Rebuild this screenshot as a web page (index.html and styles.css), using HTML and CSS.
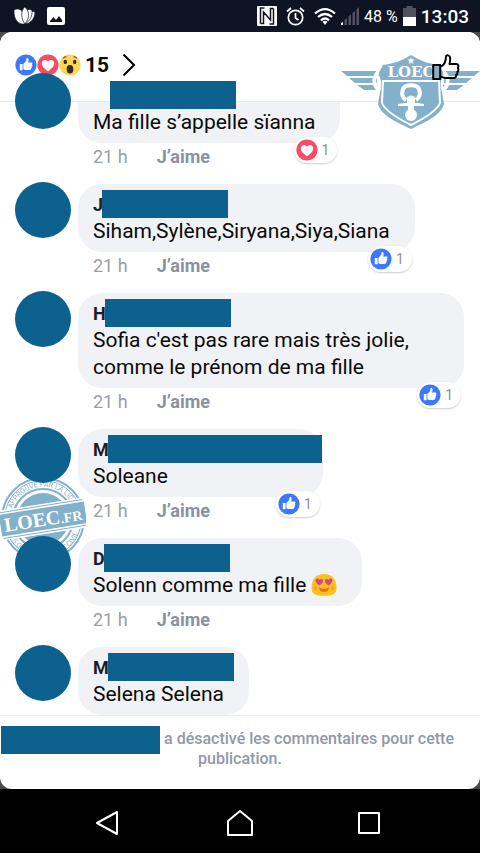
FILE: index.html
```html
<!DOCTYPE html>
<html lang="fr">
<head>
    <meta charset="UTF-8">
    <meta name="viewport" content="width=device-width, initial-scale=1.0">
    <title>Commentaires</title>
    <link rel="stylesheet" href="styles.css">
</head>
<body>
    <!-- Shared icons -->
    <svg class="sprite" aria-hidden="true">
        <symbol id="like" viewBox="0 0 22 22">
            <circle cx="11" cy="11" r="10.6" fill="#3b78fb"/>
            <path fill="#fff" d="M4.8 9.9h2.8v6.4H4.8zM8.4 10l2.7-2.9.5-2.8c.1-.6 1.800-.5 2 1.100.1 1-.2 2.100-.5 3h3c1.600 0 1.700 1.500.8 2 .7.700.4 1.700-.2 2 .4.700.1 1.500-.6 1.800.2 1-.5 1.700-1.400 1.700h-3.500c-1.300 0-1.900-.3-2.800-.7z"/>
        </symbol>
        <symbol id="love" viewBox="0 0 22 22">
            <circle cx="11" cy="11" r="10.6" fill="#f44d64"/>
            <path fill="#fff" d="M11 17.200C8 15 4.800 12.500 4.800 9.200c0-3.600 4.500-4.500 6.200-1.500 1.700-3 6.200-2.100 6.200 1.500 0 3.300-3.200 5.800-6.200 8z"/>
        </symbol>
        <symbol id="wow" viewBox="0 0 22 22">
            <circle cx="11" cy="11" r="10.6" fill="#fbd753"/>
            <ellipse cx="11" cy="15.300" rx="3.300" ry="4.200" fill="#3c2a20"/>
            <ellipse cx="6.300" cy="7.900" rx="1.700" ry="2.200" fill="#3c2a20"/>
            <ellipse cx="15.700" cy="7.900" rx="1.700" ry="2.200" fill="#3c2a20"/>
            <path d="M4.200 4.300q1.200-1.800 3.200-1.700M17.800 4.300q-1.200-1.800-3.200-1.700" fill="none" stroke="#7a5a25" stroke-width="1.200"/>
        </symbol>
    </svg>

    <div class="status-bar">
        <svg width="21" height="18" viewBox="0 0 21 18" fill="#fff" stroke="#0f1425" stroke-width=".7">
            <path d="M11 17C4 18-.5 12 0 3c3-2 7-1 8.500 2 2 3.500 2.500 8 2.500 12z"/>
            <path d="M12 17c5-1 9-6 9-12-1.500-1-3-.5-4.500.5z"/>
            <path d="M11 17c5-3 7.500-8 7-13.500-1.500-1.500-3.500-1.500-5 0z"/>
            <path d="M11 17C7 12 6.500 4 10.500 0c5 3 5.500 11 .5 17z"/>
        </svg>
        <svg class="gallery" width="18" height="18" viewBox="0 0 18 18">
            <rect width="18" height="18" rx="2" fill="#fff"/>
            <path d="M3 15v-1l3.500-4 2.500 3 3-4 3 4v2z" fill="#0f1425"/>
        </svg>
        <div class="status-right">
            <svg class="spaced" width="20" height="20" viewBox="0 0 20 20">
                <rect width="20" height="20" rx="1" fill="#fff"/>
                <path d="M7.500 2H3.500v15.500M3.500 17.500h3V6l7 8V2.500h3M16.500 2.500V18h-4" fill="none" stroke="#0f1425" stroke-width="1.500"/>
            </svg>
            <svg class="spaced" width="19" height="19" viewBox="0 0 19 19" fill="none" stroke="#fff" stroke-width="1.700">
                <circle cx="9.500" cy="10.500" r="7.200"/>
                <path d="M9.500 6v5l3 2M1 4.500L5 1M18 4.500L14 1"/>
            </svg>
            <svg width="22" height="18" viewBox="0 0 22 18" fill="none" stroke="#fff" stroke-width="2.300">
                <path d="M1 6.500q10-8.800 20 0M4 10q7-6 14 0M7 13.300q4-3.600 8 0"/>
                <path d="M8.500 14.700L11 18l2.500-3.300q-2.500-2-5 0z" fill="#fff" stroke="none"/>
            </svg>
            <svg width="18" height="18" viewBox="0 0 18 18" fill="#50535f">
                <path d="M0 18v-2l2-1v3z" fill="#fff"/>
                <path d="M3.500 18v-5l2.500-2v7zM7.500 18V9.500L10 7.500V18zM11.500 18V6L14 4v14zM15.500 18V2.500L18 0v18z"/>
            </svg>
            <span class="battery-level">48 %</span>
            <svg width="13" height="20" viewBox="0 0 13 20">
                <path d="M3.500 0h6v2H13v18H0V2h3.500z" fill="#50535f"/>
                <path d="M0 11h13v9H0z" fill="#fff"/>
            </svg>
            <span class="clock">13:03</span>
        </div>
    </div>

    <main class="backdrop">
        <div class="panel">
            <header class="header">
                <svg class="reaction"><use href="#like"/></svg>
                <svg class="reaction"><use href="#love"/></svg>
                <svg class="reaction"><use href="#wow"/></svg>
                <span class="total">15</span>
                <button class="icon-btn" aria-label="Voir les réactions">
                    <svg width="14" height="24" viewBox="0 0 14 24" fill="none" stroke="#000" stroke-width="2"><path d="M1.500 1.500L12 12 1.500 22.500"/></svg>
                </button>
            </header>

            <!-- LOEC badge -->
            <svg class="badge" width="139" height="76" viewBox="0 0 139 76">
                <g fill="#83b0cb">
                    <path d="M0 17h36v5H6zM8 24h28v5H14zM16 31h21v5H23z"/>
                    <path d="M139 17h-36v5h30zM131 24h-28v5h22zM123 31h-21v5h14z"/>
                    <path d="M70 1c9 6 19 9 28 10l5 9c-4 6-4 12-2 18l2 12c-3 11-18 18-33 25-15-7-30-14-33-25l2-12c2-6 2-12-2-18l5-9c9-1 19-4 28-10z"/>
                </g>
                <path d="M37 18c-5 6-5 13 1 18M103 18c5 6 5 13-1 18" fill="none" stroke="#fff" stroke-width="4"/>
                <path d="M42 27h56l1 22c-3 8-15 15-29 22-14-7-26-14-29-22z" fill="none" stroke="#fff" stroke-width="2"/>
                <path d="M70 3l1 2.500h2.700l-2.100 1.800.8 2.700-2.400-1.600L67.600 10l.8-2.700-2.100-1.800H69z" fill="#fff"/>
                <text class="badge-text" x="70" y="23" text-anchor="middle">LOEC</text>
                <path d="M65 46c-5-3-4-8-3-11 2-5 14-5 16 0 1 3 2 8-3 11" fill="none" stroke="#fff" stroke-width="4"/>
                <path d="M57 50q13-3 26 0v2H57zM66 43q4-3 8 0v6h-8zM67 51h6v6h-6z" fill="#fff"/>
                <circle cx="70" cy="61" r="6" fill="#fff"/>
            </svg>
            <button class="icon-btn like-page" aria-label="J’aime la publication">
                <svg width="28" height="26" viewBox="0 0 28 26" fill="none" stroke="#000" stroke-width="2" stroke-linejoin="round">
                    <path d="M1.200 11h7v14h-7z"/>
                    <path d="M8.500 12.500c3-1 4.500-3.500 5-6l.5-4c.3-2 4-1.500 4.200 1.500.1 2-.2 4-.7 6h6.500c2.600 0 3 2.500 1.800 4 1 1 .8 2.800-.5 3.700.5 1.200 0 2.700-1.100 3.100.2 1.700-.8 3.200-2.700 3.200h-7c-2 0-4-.5-5.800-1.500"/>
                </svg>
            </button>

            <!-- LOEC.FR stamp -->
            <svg class="stamp" width="86" height="86" viewBox="0 0 86 86">
                <defs>
                    <path id="arc-top" d="M10.500 43a32.500 32.500 0 0 1 65 0"/>
                    <path id="arc-bottom" d="M5 43a38 38 0 0 0 76 0"/>
                </defs>
                <g fill="none" stroke="#83b0cb">
                    <circle cx="43" cy="43" r="41" stroke-width="2"/>
                    <circle cx="43" cy="43" r="38.500"/>
                    <circle cx="43" cy="43" r="30" stroke-width="2"/>
                </g>
                <circle cx="43" cy="43" r="26" fill="#83b0cb"/>
                <text class="stamp-ring"><textPath href="#arc-top" startOffset="50%" text-anchor="middle">APPROUVÉ PAR LA LIGUE</textPath></text>
                <text class="stamp-ring"><textPath href="#arc-bottom" startOffset="50%" text-anchor="middle">DES OFFICIERS D’ÉTAT CIVIL</textPath></text>
                <g transform="rotate(-9 43 43)">
                    <path d="M1 28h84v30H1z" fill="#fff"/>
                    <path d="M1 30h84M1 56h84" stroke="#83b0cb"/>
                    <path d="M0 32h86v22H0z" fill="#83b0cb"/>
                    <text class="stamp-name" x="43" y="50" text-anchor="middle">LOEC<tspan class="stamp-tld">.FR</tspan></text>
                </g>
            </svg>

            <ul class="comments">
                <li class="comment">
                    <div class="avatar"></div>
                    <div class="content">
                        <div class="bubble">
                            <div class="name"><span class="mask mask-first"></span></div>
                            <p>Ma fille s’appelle sïanna</p>
                            <div class="pill"><svg class="reaction"><use href="#love"/></svg>1</div>
                        </div>
                        <div class="meta"><span>21 h</span><button>J’aime</button></div>
                    </div>
                </li>
                <li class="comment">
                    <div class="avatar"></div>
                    <div class="content">
                        <div class="bubble">
                            <div class="name">J<span class="mask"></span></div>
                            <p>Siham,Sylène,Siryana,Siya,Siana</p>
                            <div class="pill"><svg class="reaction"><use href="#like"/></svg>1</div>
                        </div>
                        <div class="meta"><span>21 h</span><button>J’aime</button></div>
                    </div>
                </li>
                <li class="comment">
                    <div class="avatar"></div>
                    <div class="content">
                        <div class="bubble">
                            <div class="name">H<span class="mask"></span></div>
                            <p>Sofia c'est pas rare mais très jolie, comme le prénom de ma fille</p>
                            <div class="pill"><svg class="reaction"><use href="#like"/></svg>1</div>
                        </div>
                        <div class="meta"><span>21 h</span><button>J’aime</button></div>
                    </div>
                </li>
                <li class="comment">
                    <div class="avatar"></div>
                    <div class="content">
                        <div class="bubble">
                            <div class="name">M<span class="mask mask-long"></span></div>
                            <p>Soleane</p>
                            <div class="pill"><svg class="reaction"><use href="#like"/></svg>1</div>
                        </div>
                        <div class="meta"><span>21 h</span><button>J’aime</button></div>
                    </div>
                </li>
                <li class="comment">
                    <div class="avatar"></div>
                    <div class="content">
                        <div class="bubble">
                            <div class="name">D<span class="mask"></span></div>
                            <p>Solenn comme ma fille
                                <svg class="emoji" width="26" height="22" viewBox="0 0 26 22" role="img" aria-label="yeux en cœur">
                                    <path d="M13 0c8 0 12.500 5 12.500 14 0 6-4 7.800-12.500 7.800S.5 20 .5 14C.5 5 5 0 13 0z" fill="#fcc21b"/>
                                    <path d="M8.500 11.500C5.500 9.500 3.800 7 5 5.300c1-1.300 2.700-.8 3.400.7 1-1.300 3-1.600 3.500-.1.600 2-1 4.100-3.400 5.600zM17.500 11.500c3-2 4.700-4.500 3.500-6.200-1-1.300-2.700-.8-3.400.7-1-1.300-3-1.600-3.500-.1-.6 2 1 4.100 3.400 5.600z" fill="#d1478f"/>
                                    <path d="M8 13.500q5 2.500 10 0c0 3-2.500 4.500-5 4.500s-5-1.500-5-4.500z" fill="#e8722a"/>
                                    <circle cx="4.500" cy="14" r="2" fill="#f9a12b"/>
                                    <circle cx="21.500" cy="14" r="2" fill="#f9a12b"/>
                                </svg>
                            </p>
                        </div>
                        <div class="meta"><span>21 h</span><button>J’aime</button></div>
                    </div>
                </li>
                <li class="comment">
                    <div class="avatar"></div>
                    <div class="content">
                        <div class="bubble">
                            <div class="name">M<span class="mask"></span></div>
                            <p>Selena Selena</p>
                        </div>
                    </div>
                </li>
            </ul>

            <footer class="notice">
                <p><span class="mask"></span>a désactivé les commentaires pour cette publication.</p>
            </footer>
        </div>
    </main>

    <nav class="nav-bar">
        <button aria-label="Retour">
            <svg width="32" height="28" viewBox="0 0 32 28"><path d="M23 3v22L3 14z"/></svg>
        </button>
        <button aria-label="Accueil">
            <svg width="28" height="28" viewBox="0 0 28 28"><path d="M2 26V12L14 2l12 10v14z"/></svg>
        </button>
        <button aria-label="Applications">
            <svg width="28" height="28" viewBox="0 0 28 28"><path d="M3 4h20v20H3z"/></svg>
        </button>
    </nav>
</body>
</html>
```

FILE: styles.css
```css
* {
    margin: 0;
    padding: 0;
    box-sizing: border-box;
    font-family: Roboto, sans-serif;
}

body {
    display: flex;
    flex-direction: column;
    min-height: 100vh;
    background: #000;
    color: #0a0a0a;
    overflow-x: hidden;
}

svg {
    flex-shrink: 0;
}

button {
    background: none;
    border: none;
    cursor: pointer;
}

.sprite {
    position: absolute;
    width: 0;
    height: 0;
}

/* Status bar */
.status-bar {
    display: flex;
    align-items: center;
    height: 32px;
    padding: 0 11px 0 14px;
    background: #0f1425;
    color: #fff;
}

.gallery {
    margin-left: 12px;
}

.status-right {
    display: flex;
    align-items: center;
    gap: 5px;
    margin-left: auto;
}

.spaced {
    margin-right: 4px;
}

.battery-level {
    font-size: 16px;
}

.clock {
    font-size: 19px;
    font-weight: 500;
}

/* Panel */
.backdrop {
    flex: 1;
    display: flex;
    background: #4a4a4a;
}

.panel {
    position: relative;
    flex: 1;
    min-width: 0;
    display: flex;
    flex-direction: column;
    background: #fff;
    border-radius: 12px;
}

.header {
    position: relative;
    z-index: 1;
    display: flex;
    align-items: center;
    height: 70px;
    padding: 0 0 3px 15px;
    background: #fff;
    border-bottom: 1px solid #e9eaee;
    border-radius: 12px 12px 0 0;
}

.reaction {
    width: 22px;
    height: 22px;
}

.total {
    margin: 0 13px 0 4px;
    font-size: 21px;
    font-weight: 700;
}

.icon-btn {
    display: flex;
}

.badge {
    position: absolute;
    z-index: 3;
    top: 22px;
    right: 0;
}

.badge-text {
    fill: #fff;
    font: bold 15px "DejaVu Serif", serif;
}

.like-page {
    position: absolute;
    z-index: 4;
    top: 22px;
    right: 20px;
}

.stamp {
    position: absolute;
    z-index: 1;
    top: 444px;
    left: 0;
}

.stamp-ring {
    fill: #83b0cb;
    font-size: 7px;
}

.stamp-name {
    fill: #fff;
    font: bold 20px "Liberation Serif", serif;
}

.stamp-tld {
    font-family: "Liberation Serif", serif;
    font-size: 14px;
}

/* Comments: the list is scrolled a little under the header */
.comments {
    flex: 1;
    margin-top: -27px;
    list-style: none;
}

.comment {
    display: flex;
    gap: 7px;
    padding: 0 16px 0 15px;
}

.avatar {
    position: relative;
    z-index: 2;
    flex-shrink: 0;
    width: 56px;
    height: 56px;
    margin-top: -2px;
    border-radius: 50%;
    background: #0c618e;
}

.content {
    flex: 1;
    min-width: 0;
}

.bubble {
    position: relative;
    width: fit-content;
    padding: 6px 25px 7px 15px;
    background: #f1f2f5;
    border-radius: 24px;
}

.bubble p {
    font-size: 21px;
    line-height: 27px;
}

.name {
    display: flex;
    align-items: center;
    height: 28px;
    font-size: 18px;
    font-weight: 700;
    color: #1b1d2c;
}

.mask {
    position: relative;
    z-index: 2;
    display: inline-block;
    width: 126px;
    height: 28px;
    margin: 0 -24px 0 -1px;
    background: #0c618e;
}

.mask-first {
    margin-left: 17px;
}

.mask-long {
    width: 214px;
}

.emoji {
    vertical-align: -4px;
}

.pill {
    position: absolute;
    right: 3px;
    bottom: -20px;
    display: flex;
    align-items: center;
    gap: 4px;
    height: 26px;
    padding: 0 8px 0 2px;
    background: #fff;
    border-radius: 13px;
    box-shadow: 0 1px 2px rgba(0,0,0,0.2);
    font-size: 14px;
    color: #8b8f9c;
}

.meta {
    display: flex;
    gap: 29px;
    padding: 0 0 14px 15px;
    font-size: 18px;
    line-height: 27px;
    color: #9a9ea8;
}

.meta button {
    font-size: 18px;
    font-weight: 700;
    color: #8a91a1;
}

/* Closed comments notice */
.notice {
    padding: 13px 20px 21px;
    border-top: 1px solid #ebecef;
    color: #9297aa;
    font-size: 16px;
    font-weight: 500;
    line-height: 19px;
    text-align: center;
}

.notice .mask {
    width: 159px;
    margin: -5px 4px -5px -25px;
    vertical-align: middle;
}

/* Android buttons */
.nav-bar {
    display: flex;
    justify-content: center;
    height: 64px;
}

.nav-bar button {
    display: flex;
    align-items: center;
    justify-content: center;
    width: 130px;
    padding-top: 4px;
}

.nav-bar svg {
    fill: none;
    stroke: #fff;
    stroke-width: 2;
    stroke-linejoin: round;
}
```
